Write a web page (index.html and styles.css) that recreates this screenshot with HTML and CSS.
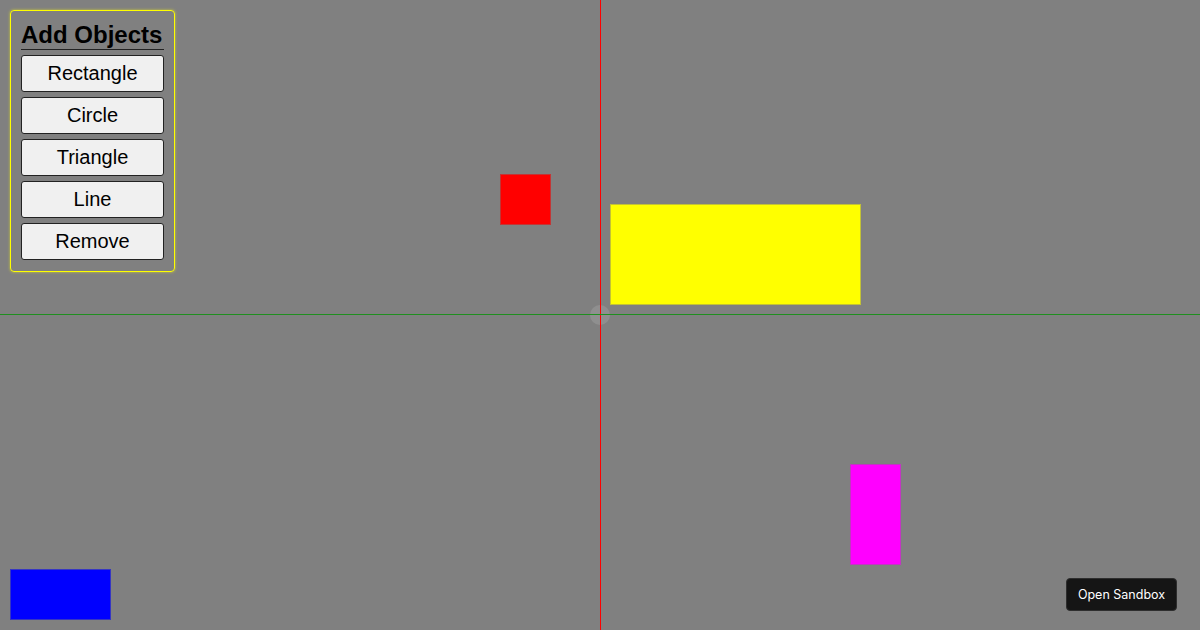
FILE: index.html
```html
<!DOCTYPE html>
<html>
<head>
<meta charset="utf-8">
<link rel="stylesheet" href="styles.css">
</head>
<body>
<div class="stage">
  <div class="axis-v"></div>
  <div class="axis-h"></div>
  <div class="origin"></div>
  <div class="shape red"></div>
  <div class="shape yellow"></div>
  <div class="shape magenta"></div>
  <div class="shape blue"></div>

  <div class="panel">
    <h3 class="panel-title">Add Objects</h3>
    <button class="tool">Rectangle</button>
    <button class="tool">Circle</button>
    <button class="tool">Triangle</button>
    <button class="tool">Line</button>
    <button class="tool">Remove</button>
  </div>

  <button class="sandbox">Open Sandbox</button>
</div>
</body>
</html>
```
FILE: styles.css
```css
html, body {
  margin: 0;
  padding: 0;
  width: 1200px;
  height: 630px;
  overflow: hidden;
  background: #808080;
  font-family: "Liberation Sans", Arial, sans-serif;
}
.stage {
  position: relative;
  width: 1200px;
  height: 630px;
  background: #808080;
}
.axis-v {
  position: absolute;
  left: 600px;
  top: 0;
  width: 1px;
  height: 630px;
  background: #ff0000;
  z-index: 2;
}
.axis-h {
  position: absolute;
  left: 0;
  top: 314px;
  width: 1200px;
  height: 1px;
  background: #1f8f1f;
  z-index: 2;
}
.origin {
  position: absolute;
  left: 590px;
  top: 305px;
  width: 20px;
  height: 20px;
  border-radius: 50%;
  background: rgba(255, 255, 255, 0.12);
  z-index: 1;
}
.shape {
  position: absolute;
  box-sizing: border-box;
  border: 1px solid rgba(120, 120, 120, 0.45);
}
.red { left: 500px; top: 174px; width: 51px; height: 51px; background: #ff0000; }
.yellow { left: 610px; top: 204px; width: 251px; height: 101px; background: #ffff00; }
.magenta { left: 850px; top: 464px; width: 51px; height: 101px; background: #ff00ff; }
.blue { left: 10px; top: 569px; width: 101px; height: 51px; background: #0000ff; }

.panel {
  position: absolute;
  left: 10px;
  top: 10px;
  box-sizing: border-box;
  width: 165px;
  padding: 10px 10px 11px 10px;
  border: 1px solid #ffff00;
  border-radius: 4px;
  box-shadow: 0 0 3px rgba(255, 255, 0, 0.6);
  display: flex;
  flex-direction: column;
  gap: 5px;
  z-index: 5;
}
.panel-title {
  margin: 0;
  font-size: 24px;
  font-weight: bold;
  line-height: 28px;
  color: #000;
  border-bottom: 1px solid #222;
  white-space: nowrap;
}
.tool {
  height: 37px;
  box-sizing: border-box;
  background: #f0f0f0;
  border: 1px solid #222;
  border-radius: 3px;
  font-family: "Liberation Sans", Arial, sans-serif;
  font-size: 20px;
  color: #000;
  padding: 0;
}
.sandbox {
  position: absolute;
  left: 1066px;
  top: 578px;
  width: 111px;
  height: 33px;
  box-sizing: border-box;
  background: #151515;
  border: 1px solid #2e2e2e;
  border-radius: 4px;
  color: #fff;
  font-family: Inter, "Liberation Sans", sans-serif;
  font-size: 12.5px;
  padding: 0;
  z-index: 5;
}
```
